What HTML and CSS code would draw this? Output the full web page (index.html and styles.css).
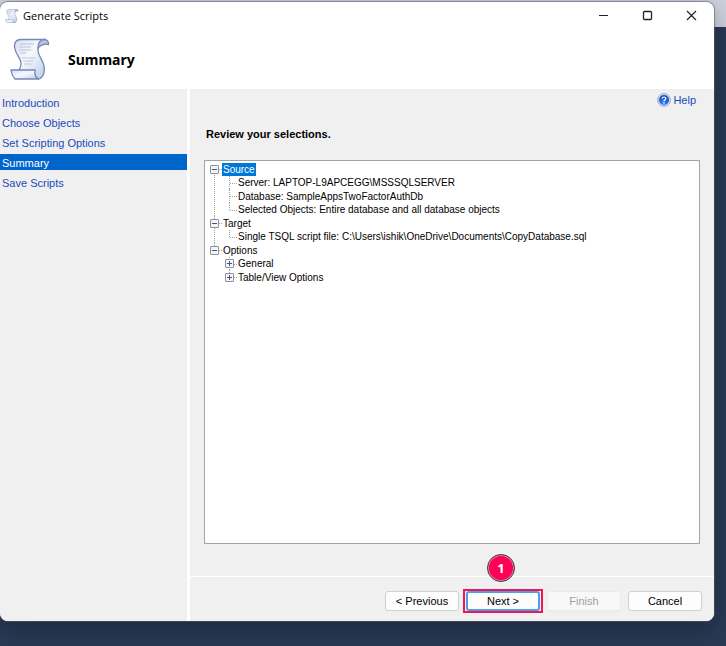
FILE: index.html
```html
<!DOCTYPE html>
<html lang="en">
<head>
  <meta charset="UTF-8">
  <meta name="viewport" content="width=device-width, initial-scale=1.0">
  <title>Generate Scripts</title>
  <link rel="stylesheet" href="styles.css">
</head>
<body>
  <svg width="0" height="0" class="defs" aria-hidden="true">
    <defs>
      <linearGradient id="paper" x1="0" y1="0" x2="1" y2="1">
        <stop offset="0" stop-color="#d5def2"/>
        <stop offset="0.45" stop-color="#f6f8fe"/>
        <stop offset="1" stop-color="#bccbe8"/>
      </linearGradient>
      <radialGradient id="ball" cx="0.45" cy="0.75" r="0.7">
        <stop offset="0" stop-color="#2f8cff"/>
        <stop offset="1" stop-color="#1747b5"/>
      </radialGradient>
      <symbol id="scroll" viewBox="0 0 40 42">
        <path d="M10 1.500C4 2.500 3.500 8 5.500 13c2 5 6 9 5.500 13-.2 2.500-.8 4-2 6L29 41c5-2 6.500-9 4.500-15C32 21 28.500 18 28 13c-.3-5 2-9 6-11.500z" fill="url(#paper)" stroke="#7688b4" stroke-width="1.300"/>
        <path d="M28 10c-.3-5 2.500-8.500 6-8.500 3.300 0 4.800 2 4.500 5-3.500-.8-7 0-10.500 3.500z" fill="#b5c5e6" stroke="#7688b4" stroke-width="1.300"/>
        <path d="M1 32h24c-.5 4.500.5 8 4 9H5C2.800 38.500 1.300 35.500 1 32z" fill="url(#paper)" stroke="#7688b4" stroke-width="1.300"/>
        <path d="M10 6h14M9 9h12M9 12h12M10 15h6M12 20h13M13 23h10M14 26h7" stroke="#bcc5d8" fill="none"/>
      </symbol>
    </defs>
  </svg>

  <div class="window">
    <div class="title-bar">
      <svg class="app-icon"><use href="#scroll"/></svg>
      <span class="window-title">Generate Scripts</span>
      <div class="window-buttons">
        <button type="button" aria-label="Minimize">
          <svg width="11" height="11"><path d="M1 5.500h9" stroke="#222"/></svg>
        </button>
        <button type="button" aria-label="Maximize">
          <svg width="11" height="11"><rect x="1.500" y="1.500" width="8" height="8" rx="1" fill="none" stroke="#222" stroke-width="1.300"/></svg>
        </button>
        <button type="button" aria-label="Close">
          <svg width="11" height="11"><path d="M1 1l9 9M10 1l-9 9" stroke="#222" stroke-width="1.200"/></svg>
        </button>
      </div>
    </div>

    <header class="page-header">
      <svg class="page-icon"><use href="#scroll"/></svg>
      <h1>Summary</h1>
    </header>

    <div class="wizard">
      <nav class="steps">
        <a href="#">Introduction</a>
        <a href="#">Choose Objects</a>
        <a href="#">Set Scripting Options</a>
        <a href="#" class="current">Summary</a>
        <a href="#">Save Scripts</a>
      </nav>

      <main class="main">
        <div class="content">
          <a href="#" class="help">
            <svg width="14" height="14" viewBox="0 0 14 14">
              <circle cx="7" cy="7" r="6.400" fill="#d5dff0" stroke="#98a8c8"/>
              <circle cx="7" cy="7" r="5" fill="url(#ball)"/>
              <path d="M5.200 5.500C5.200 3.500 8.900 3.500 8.900 5.500c0 1.300-1.900 1.300-1.900 2.700" fill="none" stroke="#fff" stroke-width="1.200"/>
              <circle cx="7" cy="10" r="0.800" fill="#fff"/>
            </svg>
            Help
          </a>
          <h2>Review your selections.</h2>

          <div class="tree-box">
            <ul class="tree">
              <li>
                <div class="node"><button type="button" class="toggle" aria-label="Collapse Source"></button><span class="label selected">Source</span></div>
                <ul>
                  <li><div class="node"><span class="label">Server: LAPTOP-L9APCEGG\MSSSQLSERVER</span></div></li>
                  <li><div class="node"><span class="label">Database: SampleAppsTwoFactorAuthDb</span></div></li>
                  <li><div class="node"><span class="label">Selected Objects: Entire database and all database objects</span></div></li>
                </ul>
              </li>
              <li>
                <div class="node"><button type="button" class="toggle" aria-label="Collapse Target"></button><span class="label">Target</span></div>
                <ul>
                  <li><div class="node"><span class="label">Single TSQL script file: C:\Users\ishik\OneDrive\Documents\CopyDatabase.sql</span></div></li>
                </ul>
              </li>
              <li>
                <div class="node"><button type="button" class="toggle" aria-label="Collapse Options"></button><span class="label">Options</span></div>
                <ul>
                  <li><div class="node"><button type="button" class="toggle closed" aria-label="Expand General"></button><span class="label">General</span></div></li>
                  <li><div class="node"><button type="button" class="toggle closed" aria-label="Expand Table/View Options"></button><span class="label">Table/View Options</span></div></li>
                </ul>
              </li>
            </ul>
          </div>
        </div>

        <footer class="footer">
          <button type="button" class="btn">&lt; Previous</button>
          <div class="callout">
            <span class="badge">1</span>
            <button type="button" class="btn btn-default">Next &gt;</button>
          </div>
          <button type="button" class="btn" disabled>Finish</button>
          <button type="button" class="btn">Cancel</button>
        </footer>
      </main>
    </div>
  </div>
</body>
</html>
```
FILE: styles.css
```css
* {
  box-sizing: border-box;
}
body {
  margin: 0;
  min-height: 100vh;
  padding: 2px 12px 25px 0;
  display: flex;
  font-family: "Liberation Sans", Arial, sans-serif;
  font-size: 11px;
  color: #000;
  background: linear-gradient(#cdd0dd 27px, #293955 27px);
}
button {
  font: inherit;
  padding: 0;
}
a {
  color: #1a4bbd;
  text-decoration: none;
}
ul {
  list-style: none;
  margin: 0;
  padding: 0;
}
.defs {
  position: absolute;
}
.window {
  flex: 1;
  display: flex;
  flex-direction: column;
  background: #fff;
  border-radius: 8px;
  overflow: hidden;
  box-shadow: 0 0 1px 1px rgba(90,95,110,0.6), 0 8px 24px rgba(0,0,0,0.3);
}

/* title bar */
.title-bar {
  display: flex;
  align-items: center;
  height: 27px;
  padding-left: 5px;
}
.app-icon {
  width: 14px;
  height: 14px;
}
.window-title {
  margin-left: 4px;
  font-family: "Open Sans", sans-serif;
  font-size: 11px;
}
.window-buttons {
  margin: 0 1px 0 auto;
  display: flex;
}
.window-buttons button {
  width: 44px;
  height: 27px;
  border: none;
  background: transparent;
  display: flex;
  align-items: center;
  justify-content: center;
}
.page-header {
  display: flex;
  align-items: center;
  gap: 18px;
  height: 60px;
  padding-left: 10px;
}
.page-icon {
  width: 40px;
  height: 42px;
}
.page-header h1 {
  margin: 0;
  font-family: "Noto Sans", sans-serif;
  font-size: 14px;
}

/* wizard body */
.wizard {
  flex: 1;
  display: flex;
  gap: 3px;
}
.steps {
  width: 187px;
  padding-top: 5px;
  display: flex;
  flex-direction: column;
  gap: 4px;
  background: #f0f0f0;
}
.steps a {
  padding-left: 2px;
  line-height: 19px;
  height: 16px;
}
.steps .current {
  background: #0066cc;
  color: #fff;
}
.main {
  flex: 1;
  display: flex;
  flex-direction: column;
  background: #f0f0f0;
}
.content {
  flex: 1;
  display: flex;
  flex-direction: column;
  padding: 4px 14px 32px;
}
.help {
  align-self: flex-end;
  margin-right: 4px;
  display: flex;
  align-items: center;
  gap: 2px;
}
.content h2 {
  margin: 20px 0 18px 2px;
  font-size: 11px;
  line-height: 15px;
}

/* tree */
.tree-box {
  flex: 1;
  background: #fff;
  border: 1px solid #a0a3aa;
  padding: 1px 5px;
  font-size: 10px;
}
.tree li {
  position: relative;
}
.tree li::before {
  content: "";
  position: absolute;
  left: 4px;
  top: 0;
  bottom: 0;
  border-left: 1px dotted #a0a0a0;
}
.tree > li:first-child::before {
  top: 7px;
}
.tree li:last-child::before {
  bottom: auto;
  height: 7px;
}
.tree ul {
  padding-left: 15px;
}
.node {
  display: flex;
  align-items: center;
  height: 14px;
}
.tree ul li:nth-child(odd) .node {
  height: 13px;
}
.node::before {
  content: "";
  position: absolute;
  left: 5px;
  top: 7px;
  width: 7px;
  border-top: 1px dotted #a0a0a0;
}
.toggle {
  position: relative;
  width: 9px;
  height: 9px;
  border: 1px solid #919191;
  border-radius: 1px;
  background: linear-gradient(#3a57a0, #3a57a0) center / 5px 1px no-repeat, #f5f5f5;
}
.toggle.closed {
  background: linear-gradient(#3a57a0, #3a57a0) center / 5px 1px no-repeat, linear-gradient(#3a57a0, #3a57a0) center / 1px 5px no-repeat, #f5f5f5;
}
.label {
  margin-left: 12px;
  padding: 0 1px;
  line-height: 13px;
  white-space: nowrap;
}
.toggle + .label {
  margin-left: 3px;
}
.label.selected {
  background: #0078d7;
  color: #fff;
}

/* buttons */
.footer {
  display: flex;
  justify-content: flex-end;
  align-items: center;
  gap: 7px;
  height: 45px;
  padding: 3px 12px 0 0;
  border-top: 1px solid #fff;
}
.btn {
  width: 74px;
  height: 20px;
  border: 1px solid #d0d0d0;
  border-radius: 3px;
  background: #fdfdfd;
  color: #000;
}
.btn:disabled {
  border-color: #eaeaea;
  background: #f8f8f8;
  color: #a0a0a0;
}
.btn-default {
  border: 2px solid #4ca0dd;
  display: block;
}
.callout {
  position: relative;
  margin: 0 -3px;
  padding: 0 1px;
  border: 2px solid #f0145a;
}
.badge {
  position: absolute;
  left: 22px;
  bottom: 29px;
  width: 28px;
  height: 28px;
  border: 1px solid #444;
  border-radius: 50%;
  background: #ff0058;
  box-shadow: inset 0 0 0 1px #d990a8;
  color: #fff;
  font: bold 13px/26px "Noto Sans", sans-serif;
  text-align: center;
}
```
